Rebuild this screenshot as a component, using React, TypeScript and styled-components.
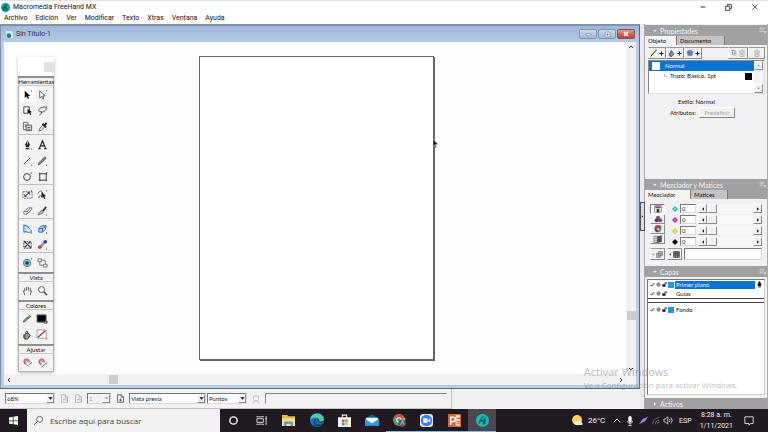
import React from "react";
import styled, { createGlobalStyle, css } from "styled-components";

const GlobalStyle = createGlobalStyle`
  *, *::before, *::after { box-sizing: border-box; }
  body { margin: 0; background: #f0f0f3; }
  button, input, select { font: inherit; color: inherit; margin: 0; padding: 0; border: 0; border-radius: 0; background: none; outline: 0; min-width: 0; }
  svg { display: block; flex: none; overflow: visible; }
  h1, h2, h3, p, ul { margin: 0; padding: 0; font-size: inherit; font-weight: inherit; list-style: none; }
`;

const systemFont = `"Open Sans", "Noto Sans", sans-serif`;
const captionFont = `Roboto, "Noto Sans", sans-serif`;
const classicFont = `Lato, "Liberation Sans", sans-serif`;

const raised = css`
  background: #f0f0f0;
  border: 1px solid;
  border-color: #fff #8b8b8b #8b8b8b #fff;
`;
const sunken = css`
  background: #fff;
  border: 1px solid;
  border-color: #777 #d8d8d8 #d8d8d8 #777;
`;

const Screen = styled.div`
  position: relative;
  display: flex;
  flex-direction: column;
  min-height: 100vh;
  font-family: ${classicFont};
  font-size: 6px;
  line-height: 8px;
  color: #111;
`;

/* ---------- application frame ---------- */
const TitleBar = styled.header`
  display: flex;
  align-items: center;
  gap: 3px;
  height: 13px;
  padding: 0 2px 0 1px;
  background: #fff;
  border-top: 1px solid #e4e4e4;
  font-family: ${captionFont};
  font-size: 7px;
`;
const AppTitle = styled.h1`
  flex: 1;
`;
const WindowButton = styled.button`
  display: grid;
  place-items: center;
  width: 23px;
  height: 12px;
`;
const MenuBar = styled.nav`
  display: flex;
  gap: 8px;
  height: 11px;
  padding: 0 4px;
  background: #fff;
  font-family: ${captionFont};
  font-size: 7px;
  line-height: 11px;
`;
const Workspace = styled.main`
  flex: 1;
  display: flex;
`;
const Editor = styled.section`
  flex: 1;
  display: flex;
  flex-direction: column;
  min-width: 0;
`;

/* ---------- document window ---------- */
const DocWindow = styled.section`
  flex: 1;
  display: flex;
  flex-direction: column;
  border: 1px solid #4d7180;
  border-top: 2px solid #8592a6;
  border-left-color: #7f90a8;
  background: #b9cde8;
`;
const DocTitleBar = styled.header`
  display: flex;
  align-items: center;
  gap: 3px;
  height: 16px;
  padding: 0 4px 0 5px;
  background: linear-gradient(#9fb8d9, #b6cae5);
  font-family: ${captionFont};
  font-size: 7px;
  color: #26344a;
`;
const DocTitle = styled.h2`
  flex: 1;
`;
const DocButton = styled.button<{ $danger?: boolean }>`
  display: grid;
  place-items: center;
  width: 18px;
  height: 10px;
  margin-left: -2px;
  border: 1px solid ${(p) => (p.$danger ? "#8c4f55" : "#8194b0")};
  border-radius: 2px;
  background: ${(p) => (p.$danger ? "linear-gradient(#dc9a94, #c0392f)" : "linear-gradient(#ccdaee, #a5bbd9)")};
`;
const DocBody = styled.div`
  flex: 1;
  display: grid;
  grid-template-columns: 1fr 10px;
  grid-template-rows: 1fr 11px;
  margin: 0 3px 3px;
  background: #f3f3f6;
`;
const Canvas = styled.div`
  position: relative;
  display: grid;
  place-items: center;
  background: #fefefe;
`;
const Artboard = styled.div`
  position: relative;
  left: 1px;
  width: 235px;
  height: 304px;
  border: 1px solid #666;
  box-shadow: 1px 1px 0 #666;
  background: #fff;
`;
const Pointer = styled.svg`
  position: absolute;
  left: 233px;
  top: 82px;
`;
const ScrollBar = styled.div<{ $vertical?: boolean }>`
  display: flex;
  flex-direction: ${(p) => (p.$vertical ? "column" : "row")};
  align-items: center;
  background: #f1f1f4;
`;
const ScrollArrow = styled.button`
  display: grid;
  place-items: center;
  width: 10px;
  height: 10px;
`;
const ScrollSpace = styled.span<{ $grow: number }>`
  flex: ${(p) => p.$grow};
`;
const ScrollThumb = styled.span`
  width: 9px;
  height: 9px;
  background: #cdcdd0;
`;

/* ---------- tool palette ---------- */
const Palette = styled.aside`
  position: absolute;
  left: 14px;
  top: 15px;
  width: 36px;
  background: #f2f2f2;
  box-shadow: inset 0 0 0 1px #b4b4b4, 0 1px 3px #bbb;
`;
const PaletteGrip = styled.div`
  display: flex;
  justify-content: flex-end;
  align-items: center;
  height: 19px;
  background: #fff;
`;
const GripBox = styled.span`
  width: 10px;
  height: 10px;
  background: #e3e3e3;
`;
const PaletteTitle = styled.h3`
  height: 10px;
  border-top: 2px solid #8f8f8f;
  border-bottom: 1px solid #c8c8c8;
  line-height: 8px;
  text-align: center;
  white-space: nowrap;
`;
const ToolGroup = styled.div<{ $last?: boolean }>`
  display: grid;
  grid-template-columns: 15px 15px;
  padding-left: 2px;
  padding-bottom: ${(p) => (p.$last ? 2 : 0)}px;
  & + & { border-top: 1px solid #c0c0c0; padding-top: 1px; }
`;
const ToolButton = styled.button<{ $active?: boolean }>`
  display: grid;
  place-items: center;
  height: 16px;
  background: ${(p) => (p.$active ? "#fff" : "transparent")};
`;

/* ---------- status bar ---------- */
const StatusBar = styled.footer`
  display: flex;
  align-items: center;
  gap: 4px;
  width: 452px;
  height: 20px;
  padding: 0 4px 0 5px;
  border-right: 1px solid #c4c4c4;
  border-bottom: 1px solid #c4c4c4;
  background: #f2f2f4;
`;
const ComboPair = styled.span`
  display: flex;
  gap: 1px;
`;
const Combo = styled.span<{ $width: number; $muted?: boolean }>`
  display: flex;
  width: ${(p) => p.$width}px;
  height: 11px;
  ${sunken}
  ${(p) => p.$muted && css`background: #f2f2f4; color: #999;`}
`;
const ComboSelect = styled.select`
  flex: 1;
  appearance: none;
  padding-left: 1px;
  line-height: 9px;
  opacity: 1;
`;
const ComboArrow = styled.span`
  display: grid;
  place-items: center;
  width: 8px;
  ${raised}
  pointer-events: none;
`;
const IconButton = styled.button`
  display: grid;
  place-items: center;
  width: 10px;
  height: 12px;
`;
const StatusField = styled.output`
  flex: 1;
  height: 11px;
  border: 1px solid transparent;
  border-top-color: #888;
  border-left-color: #888;
`;

/* ---------- dock ---------- */
const Splitter = styled.div`
  position: relative;
  width: 5px;
  border-right: 1px solid #aaa;
  background: #e9e9ee;
`;
const SplitterHandle = styled.button`
  position: absolute;
  top: 178px;
  left: 0;
  display: grid;
  place-items: center;
  width: 5px;
  height: 29px;
  border: 1px solid #555;
  background: #ddd;
`;
const Dock = styled.aside`
  display: flex;
  flex-direction: column;
  width: 123px;
  padding-top: 1px;
  background: #f1f1f3;
  border-right: 1px solid #aaa;
`;
const PanelHeader = styled.h2`
  display: flex;
  align-items: center;
  gap: 3px;
  height: 11px;
  padding: 0 1px 0 8px;
  background: #a1a1a3;
  color: #f2f2f2;
  font-size: 7px;
`;
const PanelTitle = styled.span`
  flex: 1;
`;
const Tabs = styled.div`
  display: flex;
  height: 9px;
  background: #a1a1a3;
`;
const Tab = styled.button<{ $width: number; $active?: boolean }>`
  width: ${(p) => p.$width}px;
  padding-left: 3px;
  border-right: 1px solid #777;
  background: ${(p) => (p.$active ? "#f3f3f3" : "#c3c3c5")};
  text-align: left;
  line-height: 9px;
`;
const ObjectPanel = styled.div`
  height: 134px;
  padding: 2px 2px 0 3px;
`;
const Toolbar = styled.div`
  display: flex;
  height: 12px;
  margin-bottom: 1px;
`;
const ToolbarButton = styled.button<{ $width: number }>`
  display: flex;
  align-items: center;
  justify-content: center;
  gap: 1px;
  width: ${(p) => p.$width}px;
  ${raised}
  border-top-color: #999;
`;
const ToolbarGap = styled.span`
  flex: 1;
  border-top: 1px solid #999;
`;
const ObjectList = styled.div`
  display: flex;
  height: 34px;
  background: #fff;
  border: 1px solid;
  border-color: #888 #ddd #ddd #888;
`;
const ObjectRows = styled.ul`
  flex: 1;
`;
const ObjectRow = styled.li<{ $selected?: boolean }>`
  display: flex;
  align-items: center;
  gap: ${(p) => (p.$selected ? 5 : 2)}px;
  height: 10px;
  padding: 0 2px 0 ${(p) => (p.$selected ? 3 : 15)}px;
  background: ${(p) => (p.$selected ? "#0a74d4" : "#fff")};
  color: ${(p) => (p.$selected ? "#e6f2ff" : "#111")};
`;
const Chip = styled.span<{ $color: string; $size: number }>`
  width: ${(p) => p.$size}px;
  height: ${(p) => p.$size}px;
  background: ${(p) => p.$color};
`;
const RowText = styled.span`
  flex: 1;
  white-space: nowrap;
`;
const ListScroll = styled.div`
  display: flex;
  flex-direction: column;
  justify-content: space-between;
  width: 10px;
  background: #f4f4f4;
`;
const StepButton = styled.button`
  flex: none;
  display: grid;
  place-items: center;
  width: 9px;
  height: 9px;
  ${raised}
`;
const StyleLine = styled.p`
  margin-top: 4px;
  padding-left: 30px;
`;
const AttributeLine = styled.div`
  display: flex;
  align-items: center;
  gap: 3px;
  margin-top: 1px;
  padding-left: 22px;
`;
const DefaultButton = styled.button`
  width: 36px;
  height: 11px;
  ${raised}
  color: #aaa;
`;
const MixerPanel = styled.div`
  height: 67px;
  padding: 4px 5px 0 5px;
`;
const MixerTop = styled.div`
  display: flex;
  gap: 7px;
  height: 45px;
`;
const ModeColumn = styled.div`
  flex: none;
  display: grid;
  grid-template-rows: repeat(4, 10px);
  width: 15px;
  height: 42px;
  padding-top: 1px;
`;
const ModeButton = styled.button<{ $active?: boolean }>`
  display: grid;
  place-items: center;
  ${raised}
  ${(p) => p.$active && css`border-color: #777 #fff #fff #777; background: #fff;`}
`;
const Channels = styled.div`
  flex: 1;
  min-width: 0;
  display: grid;
  grid-template-columns: minmax(0, 1fr);
  grid-template-rows: repeat(4, 11px);
`;
const Channel = styled.label`
  display: flex;
  align-items: center;
`;
const ChannelInput = styled.input`
  flex: none;
  width: 16px;
  height: 9px;
  margin: 0 2px;
  padding-left: 1px;
  ${sunken}
`;
const ChannelRange = styled.input`
  flex: 1;
  width: 0;
  appearance: none;
  height: 9px;
  background: #f7f7f7;
  &::-webkit-slider-thumb {
    appearance: none;
    width: 10px;
    height: 9px;
    ${raised}
  }
`;
const MixerBottom = styled.div`
  display: flex;
  gap: 2px;
  height: 12px;
`;
const SwatchField = styled.input`
  flex: 1;
  ${sunken}
`;
const LayerPanel = styled.div`
  flex: 1;
  display: flex;
  padding: 2px 2px 3px;
`;
const LayerList = styled.ul`
  flex: 1;
  background: #fff;
  border: 1px solid;
  border-color: #777 #ccc #ccc #777;
`;
const LayerRow = styled.li`
  display: flex;
  align-items: center;
  gap: 1px;
  height: 9px;
  padding: 0 1px 0 2px;
`;
const LayerName = styled.span<{ $selected?: boolean }>`
  flex: 1;
  padding-left: 1px;
  background: ${(p) => (p.$selected ? "#0a74d4" : "transparent")};
  color: ${(p) => (p.$selected ? "#e6f2ff" : "#111")};
`;
const LayerDivider = styled.li`
  height: 5px;
  margin-bottom: 2px;
  border: solid #444;
  border-width: 1px 0;
`;

/* ---------- desktop ---------- */
const Watermark = styled.div`
  position: absolute;
  right: 30px;
  bottom: 42px;
  color: rgba(140, 140, 150, 0.6);
  font-family: ${systemFont};
  font-size: 8px;
  line-height: 10px;
  pointer-events: none;
`;
const WatermarkTitle = styled.p`
  font-size: 11px;
  line-height: 16px;
`;
const TaskBar = styled.footer`
  display: flex;
  align-items: stretch;
  height: 23px;
  background: #211a22;
  color: #f2f2f2;
  font-family: ${captionFont};
  font-size: 7px;
`;
const StartButton = styled.button`
  display: grid;
  place-items: center;
  width: 27px;
`;
const SearchBox = styled.label`
  display: flex;
  align-items: center;
  gap: 7px;
  width: 193px;
  padding-left: 7px;
  background: #f2f2f3;
  color: #444;
`;
const SearchInput = styled.input`
  flex: 1;
  font-family: ${systemFont};
  font-size: 8px;
  &::placeholder { color: #444; opacity: 1; }
`;
const AppButtons = styled.div`
  display: grid;
  grid-template-columns: repeat(10, 1fr);
  width: 276px;
`;
const AppButton = styled.button<{ $open?: boolean; $active?: boolean }>`
  display: grid;
  place-items: center;
  border-bottom: 1px solid ${(p) => (p.$open ? "#76b9e8" : "transparent")};
  background: ${(p) => (p.$active ? "#4d464e" : "transparent")};
`;
const Tray = styled.div`
  flex: 1;
  display: flex;
  align-items: center;
  justify-content: flex-end;
  gap: 4px;
  padding-right: 14px;
`;
const Weather = styled.span`
  display: flex;
  align-items: center;
  gap: 5px;
  margin-right: 4px;
  font-size: 8px;
`;
const LanguageLabel = styled.span`
  margin: 0 4px 0 2px;
`;
const Clock = styled.time`
  margin-right: 7px;
  line-height: 11px;
  text-align: center;
`;

/* ---------- drawings ---------- */
const Svg = ({ s = 12, children }: { s?: number; children: React.ReactNode }) => (
  <svg width={s} height={s} viewBox="0 0 12 12" fill="none" stroke="#333" strokeWidth="1" aria-hidden="true">
    {children}
  </svg>
);
const Triangle = ({ dir, s = 5, color = "#222" }: { dir: "up" | "down" | "left" | "right"; s?: number; color?: string }) => {
  const d = { up: "M1 9 6 3l5 6z", down: "M1 3h10L6 9z", left: "M9 1v10L3 6z", right: "M3 1v10l6-5z" }[dir];
  return <Svg s={s}><path d={d} fill={color} stroke="none" /></Svg>;
};
const Chevron = ({ dir }: { dir: "up" | "down" | "left" | "right" }) => {
  const d = { up: "M2 8l4-4 4 4", down: "M2 4l4 4 4-4", left: "M8 2 4 6l4 4", right: "M4 2l4 4-4 4" }[dir];
  return <Svg s={6}><path d={d} strokeWidth="2" /></Svg>;
};
const dot = <path d="M10 2h1" stroke="#222" />;
const corner = <path d="M10 11h1" stroke="#222" />;
const FreeHandLogo = ({ s = 10 }: { s?: number }) => (
  <Svg s={s}>
    <circle cx="6" cy="6" r="6" fill="#159a9c" stroke="none" />
    <path d="M3 10C4 7 5 3 8 2M5 7c2-2 3-1 2 1s0 2 2 0M3 6l4-1" stroke="#083f48" strokeWidth="1.2" />
  </Svg>
);
const tools: Record<string, React.ReactNode> = {
  Puntero: <><path d="M3 2v8l2-2 1.500 3 1.300-.7L6.500 7.500H9z" fill="#000" stroke="none" />{dot}</>,
  Subseleccionar: <><path d="M3 2v8l2-2 1.500 3 1-.6L6.300 7.500H9z" fill="#fff" strokeWidth=".8" />{dot}</>,
  Página: <><path d="M6 9H2V2h6v4" fill="#fff" /><path d="M6 4v6l1.500-1.500L9 11l1-.6-1-2.400h2z" fill="#111" stroke="none" /></>,
  Lazo: <><path d="M4 7.500C0 7 2 3.500 6 2.500s6 .5 3.500 3S6 8 4 7.500zM4 7c1.500 1 1 3-1.500 4" stroke="#444" />{dot}</>,
  Salida: <><path d="M1.500 1.500h5v8h-5zM3 4h2M3 6h2" stroke="#666" /><path d="M4.500 4.500h6v6h-6zM6 7h3M6 9h3" fill="#ddd" stroke="#555" /></>,
  Cuentagotas: <><path d="M2 11l1-3 4-4 2 2-4 4z" fill="#ddd" stroke="#555" strokeWidth=".8" /><path d="M6 3l4 4M8 5l2.500-3" stroke="#222" strokeWidth="2" /></>,
  Pluma: <><path d="M6 1L3.500 6l1 3h3l1-3z" fill="#222" stroke="none" /><path d="M4 10.500h4" strokeWidth="1.500" /><path d="M6 2v4" stroke="#fff" strokeWidth=".7" />{corner}</>,
  Texto: <path d="M2.500 10.500L6 2l3.500 8.500M4 7.500h4M1.500 10.500h2.500M8 10.500h2.500" stroke="#222" strokeWidth="1.300" />,
  Línea: <><path d="M2 10l7-7" stroke="#444" />{corner}</>,
  Lápiz: <><path d="M1.500 11l1-3 6-6 1.500 1.500-6 6z" fill="#888" stroke="#444" strokeWidth=".8" />{corner}</>,
  Elipse: <><circle cx="5.500" cy="6.500" r="3.700" />{dot}</>,
  Rectángulo: <><path d="M3 3h7v7H3zM2 3h1M10 3h1M2 10h1M10 10h1M3 2v1M3 10v1M10 10v1" />{dot}</>,
  Escala: <><path d="M1 3h10v7H1z" stroke="#5c5c8c" strokeDasharray="2 1" /><path d="M3 8l5-4M6 4h2v2M3 6v2h2" />{dot}</>,
  Forma: <><path d="M1 5c2-4 5-3 5-1M2 10c0-4 3-3 4-1" stroke="#555" /><path d="M5 3v7l1.500-1.500L8 11l1-.6-1-2.400h2z" fill="#222" stroke="none" />{dot}</>,
  Borrador: <path d="M2 7l5-4h4L9 7l-4 3H2zM2 7h4l3-4M6 7L5 10" stroke="#666" fill="#eee" strokeWidth=".8" />,
  Cuchillo: <><path d="M1 11c1-3 3-5 5-5l1 2c-1 2-4 2-6 3z" fill="#bbb" stroke="#444" strokeWidth=".7" /><path d="M6.500 6.500L10 2" strokeWidth="2" />{corner}</>,
  Perspectiva: <><path d="M2 2v8l5-1V4z" fill="#b9dcf5" stroke="#2471b5" /><path d="M7 5l3 3v2H5" fill="#fff" stroke="#2471b5" />{corner}</>,
  Extrusión: <><path d="M2 6l3-3h5L9 7 6 10H2z" fill="#b9d4f5" stroke="#3266ad" /><path d="M2 6h4l4-3M6 6v4" stroke="#3266ad" />{corner}</>,
  Trazo: <><path d="M2 3h8v7H2z" strokeDasharray="2 1" /><path d="M2 2l8 8M9 3L7 5M5 7l-2 2" stroke="#223" strokeWidth="1.300" /></>,
  Mezcla: <><path d="M3 9l5-5" stroke="#b58db0" strokeWidth="3" /><circle cx="9" cy="3" r="2" fill="#28448d" stroke="none" /><circle cx="3" cy="9" r="2" fill="#cc4132" stroke="none" />{corner}</>,
  Acción: <><circle cx="5.500" cy="6.500" r="4" fill="#88c1d6" stroke="#557f94" /><circle cx="5.500" cy="6.500" r="2" fill="#153f66" stroke="none" />{dot}</>,
  Conector: <path d="M1 2h4v3H1zM7 8h4v3H7zM5 3.500h4V8M3 5v4h4" stroke="#777" />,
  Mano: <path d="M3 11L1.500 6M3 7V3M5 6V2M7 6V2M9 7V3M10.500 6L9 11" stroke="#555" />,
  Zoom: <><circle cx="5" cy="5" r="3.300" stroke="#555" /><path d="M7.500 7.500L11 11" stroke="#555" strokeWidth="1.800" /></>,
  "Color de trazo": <path d="M1.500 10l1-2.500 6-5 1 1.500-6 5z" fill="#999" stroke="#444" strokeWidth=".8" />,
  Negro: <><path d="M0 2h10v8H0z" fill="#000" stroke="#777" /><path d="M8 9h3v2H8z" fill="#fff" stroke="#333" /></>,
  "Color de relleno": <><path d="M3 6l3-2 3 3-3 4H3z" fill="#999" /><path d="M4 5c0-4 3-3 2 0M2 6v4" /></>,
  "Sin relleno": <><path d="M0 1h10v9H0z" fill="#fff" stroke="#999" /><path d="M1 9l8-7" stroke="#a12c3f" strokeWidth="1.500" />{corner}</>,
  "Ajustar a punto": <><path d="M8 4.500A3 3 0 105 8L3.500 6.500a1.500 1.500 0 112.500-2L7.500 6z" fill="#e9a4a8" stroke="#b8434d" strokeWidth=".9" /><path d="M6 9l1 1M8 8l3-2" stroke="#555" /></>,
  "Ajustar a objeto": <><path d="M8 4.500A3 3 0 105 8L3.500 6.500a1.500 1.500 0 112.500-2L7.500 6z" fill="#e9a4a8" stroke="#b8434d" strokeWidth=".9" /><path d="M5 11l6-5" stroke="#555" /></>,
};
const ToolSet = ({ names, last }: { names: string[]; last?: boolean }) => (
  <ToolGroup $last={last}>
    {names.map((n) => (
      <ToolButton key={n} type="button" aria-label={n} $active={n === "Puntero"}><Svg s={11}>{tools[n]}</Svg></ToolButton>
    ))}
  </ToolGroup>
);
const PageIcon = ({ color = "#aaa", flip }: { color?: string; flip?: boolean }) => (
  <Svg s={9}><path d="M2 1h5l3 3v7H2zM7 1v3h3" stroke={color} /><path d={flip ? "M4 8h4M6 6v4" : "M4 8l4-2v3"} stroke={color} /></Svg>
);
const MenuGlyph = () => <Svg s={7}><path d="M1 2h8M1 5h8M1 8h5M8 8h4l-2 3z" stroke="#eee" /></Svg>;
const Plus = () => <Svg s={5}><path d="M6 1v10M1 6h10" strokeWidth="2.500" stroke="#222" /></Svg>;
const TrashIcon = () => <Svg s={8}><path d="M2 3h8M5 1h2M3 3v8h6V3M5 5v4M7 5v4" stroke="#999" /></Svg>;

const Panel = ({ title, open = true }: { title: string; open?: boolean }) => (
  <PanelHeader>
    <Triangle dir={open ? "down" : "right"} color="#fff" s={4} />
    <PanelTitle>{title}</PanelTitle>
    {open && <MenuGlyph />}
  </PanelHeader>
);

const ComboBox = ({ label, value, width, muted }: { label: string; value: string; width: number; muted?: boolean }) => (
  <Combo $width={width} $muted={muted}>
    <ComboSelect aria-label={label} disabled={muted}><option>{value}</option></ComboSelect>
    <ComboArrow><Triangle dir="down" color={muted ? "#aaa" : "#111"} /></ComboArrow>
  </Combo>
);

const LayerIcons = () => (
  <>
    <Svg s={5}><path d="M1 7l3 3 6-7" stroke="#111" strokeWidth="2" /></Svg>
    <Svg s={5}><circle cx="6" cy="6" r="4" fill="#999" stroke="#666" strokeWidth="2" /></Svg>
    <Svg s={5}><path d="M1 6h7v5H1z" fill="#111" /><path d="M7 6V2h4v3" strokeWidth="2" /></Svg>
  </>
);

const modes: [string, React.ReactNode][] = [
  ["CMYK", <><path d="M1 1h10v10H1z" fill="#fff" stroke="#555" /><path d="M2 2h8v3H2z" fill="#a1348e" stroke="none" /><path d="M4 6h4v5H4z" fill="#333" stroke="none" /></>],
  ["RGB", <><circle cx="6" cy="4" r="3" fill="#337c55" stroke="none" /><circle cx="4" cy="8" r="3" fill="#43338d" stroke="none" /><circle cx="9" cy="8" r="3" fill="#c32738" stroke="none" /></>],
  ["HLS", <><circle cx="6" cy="6" r="5" fill="#58a83d" stroke="none" /><path d="M6 6L1 5a5 5 0 0110 0z" fill="#cb3150" stroke="none" /><path d="M6 6v5a5 5 0 01-5-6z" fill="#5140a0" stroke="none" /><circle cx="6" cy="6" r="1.500" fill="#eee" stroke="none" /></>],
  ["Sistema", <><path d="M0 2h7v9H0z" fill="#eee" stroke="#555" /><path d="M5 3l6-2v9l-6 1z" fill="#67444e" /><path d="M1 5h3M1 8h3" stroke="#2c78c4" /></>],
];
const channels: [string, string][] = [["Cian", "#28babe"], ["Magenta", "#b32aa7"], ["Amarillo", "#d9d13e"], ["Negro", "#111"]];

const taskApps: { name: string; open?: boolean; active?: boolean; art: React.ReactNode }[] = [
  { name: "Cortana", art: <Svg s={11}><circle cx="6" cy="6" r="4" stroke="#fff" strokeWidth="1.500" /></Svg> },
  { name: "Vista de tareas", art: <Svg s={11}><path d="M1 1v1h7V1M1 11v-1h7v1M1 4h7v4H1zM11 1v10M10 4h2" stroke="#ddd" /></Svg> },
  { name: "Explorador", art: <Svg s={13}><path d="M0 1h5l1 1h6v9H0z" fill="#e5b744" stroke="none" /><path d="M0 4h12v7H0z" fill="#fce08a" stroke="none" /><path d="M2 7h8v4H8V9H4v2H2z" fill="#4e99ca" stroke="none" /></Svg> },
  { name: "Edge", art: <Svg s={14}><circle cx="6" cy="6" r="6" fill="#1872bd" stroke="none" /><path d="M0 6C1-2 12-1 12 6c0 3-5 3-5 1 1-4-5-4-7-1z" fill="#52c9a4" stroke="none" /><path d="M5 5c-2 4 2 6 6 4-3 4-8 3-8-1 0-2 1-3 2-3z" fill="#0c3e80" stroke="none" /><path d="M6 5c2 0 1 3 2 3 3 0 4-1 4-1" stroke="#211a22" /></Svg> },
  { name: "Tienda", art: <Svg s={13}><path d="M4 4V1h4v3" stroke="#eee" /><path d="M0 3h12v9H0z" fill="#f5f5f5" stroke="none" /><path d="M3.500 5H6v2.500H3.500z" fill="#df5933" stroke="none" /><path d="M6.500 5H9v2.500H6.500z" fill="#72ad3c" stroke="none" /><path d="M3.500 8H6v2.500H3.500z" fill="#2f8ed4" stroke="none" /><path d="M6.500 8H9v2.500H6.500z" fill="#e8b734" stroke="none" /></Svg> },
  { name: "Correo", art: <Svg s={14}><path d="M0 5l6-4 6 4v6H0z" fill="#155b9d" stroke="none" /><path d="M1 4h10v3L6 9 1 7z" fill="#f3f7fb" stroke="none" /><path d="M0 5l6 4 6-4v6H0z" fill="#2d9cdf" stroke="none" /></Svg> },
  { name: "Chrome", open: true, art: <Svg s={13}><circle cx="5.500" cy="5.500" r="5.500" fill="#4ea453" stroke="none" /><path d="M5.500 5.500L1 2.500a5.500 5.500 0 019.500 1z" fill="#d84c42" stroke="none" /><path d="M6 6l5-2.500c1 3-1 7-5 7.500z" fill="#e9c84a" stroke="none" /><circle cx="5.500" cy="5.500" r="2" fill="#3e7bd3" stroke="#fff" /><circle cx="8.500" cy="8.500" r="3.500" fill="#55575b" stroke="none" /><path d="M7 10l2-4 1 4" stroke="#ddd" strokeWidth=".7" /></Svg> },
  { name: "Zoom", open: true, art: <Svg s={13}><rect width="12" height="12" rx="3" fill="#e5ecf7" stroke="none" /><circle cx="6" cy="6" r="5.300" fill="#3b7ce6" stroke="none" /><path d="M3 4h4v4H3zM7.500 6L9.500 4v4z" fill="#fff" stroke="none" /></Svg> },
  { name: "PowerPoint", open: true, art: <Svg s={13}><path d="M0 0h12v12H0z" fill="#d3683e" stroke="none" /><path d="M7 1h4v10H7z" fill="#f2d8ce" stroke="none" /><path d="M2.500 10V3H4.500c3 0 3 4 0 4h-2" stroke="#fff" strokeWidth="1.300" /><path d="M8 4h3M8 7h3M8 9h3" stroke="#cc6541" /></Svg> },
  { name: "FreeHand", open: true, active: true, art: <Svg s={13}><circle cx="6" cy="6" r="6" fill="#20b9b5" stroke="none" /><path d="M3 9C4 6 5 3 7 2M5 7c2-2 3-1 2 1s0 2 2-1M3 6h6M7 9l2-6" stroke="#114c58" /></Svg> },
];

export default function App() {
  return (
    <Screen>
      <GlobalStyle />
      <TitleBar>
        <FreeHandLogo s={9} />
        <AppTitle>Macromedia FreeHand MX</AppTitle>
        <WindowButton aria-label="Minimizar"><Svg s={6}><path d="M1 6h10" strokeWidth="2" /></Svg></WindowButton>
        <WindowButton aria-label="Restaurar"><Svg s={7}><path d="M1 4h7v7H1zM4 4V1h7v7H8" strokeWidth="1.500" /></Svg></WindowButton>
        <WindowButton aria-label="Cerrar"><Svg s={6}><path d="M1 1l10 10M11 1L1 11" strokeWidth="1.500" /></Svg></WindowButton>
      </TitleBar>
      <MenuBar>
        {["Archivo", "Edición", "Ver", "Modificar", "Texto", "Xtras", "Ventana", "Ayuda"].map((m) => (
          <button key={m} type="button">{m}</button>
        ))}
      </MenuBar>

      <Workspace>
        <Editor>
          <DocWindow>
            <DocTitleBar>
              <Svg s={7}><path d="M0 0h9l3 3v9H0z" fill="#d9eef2" stroke="none" /><circle cx="5" cy="8" r="4" fill="#13868d" stroke="none" /></Svg>
              <DocTitle>Sin Título-1</DocTitle>
              <DocButton aria-label="Minimizar documento"><Svg s={7}><path d="M2 5h8v3H2z" fill="#fff" stroke="#667a96" /></Svg></DocButton>
              <DocButton aria-label="Maximizar documento"><Svg s={7}><path d="M2 2h8v8H2z" fill="#fff" stroke="#667a96" /><path d="M5 5h2v2H5z" /></Svg></DocButton>
              <DocButton $danger aria-label="Cerrar documento"><Svg s={6}><path d="M2 2l8 8M10 2l-8 8" stroke="#fff" strokeWidth="3" /></Svg></DocButton>
            </DocTitleBar>
            <DocBody>
              <Canvas>
                <Artboard>
                  <Pointer width="5" height="9" viewBox="0 0 5 9" aria-hidden="true"><path d="M0 0v7l1.500-1 1 3 1-.5-1-3H5z" fill="#111" stroke="#fff" strokeWidth=".4" /></Pointer>
                </Artboard>
                <Palette>
                  <PaletteGrip><GripBox /></PaletteGrip>
                  <PaletteTitle>Herramientas</PaletteTitle>
                  <ToolSet names={["Puntero", "Subseleccionar", "Página", "Lazo", "Salida", "Cuentagotas"]} />
                  <ToolSet names={["Pluma", "Texto", "Línea", "Lápiz", "Elipse", "Rectángulo"]} />
                  <ToolSet names={["Escala", "Forma", "Borrador", "Cuchillo"]} />
                  <ToolSet names={["Perspectiva", "Extrusión", "Trazo", "Mezcla"]} />
                  <ToolSet last names={["Acción", "Conector"]} />
                  <PaletteTitle>Vista</PaletteTitle>
                  <ToolSet last names={["Mano", "Zoom"]} />
                  <PaletteTitle>Colores</PaletteTitle>
                  <ToolSet last names={["Color de trazo", "Negro", "Color de relleno", "Sin relleno"]} />
                  <PaletteTitle>Ajustar</PaletteTitle>
                  <ToolSet last names={["Ajustar a punto", "Ajustar a objeto"]} />
                </Palette>
              </Canvas>
              <ScrollBar $vertical>
                <ScrollArrow aria-label="Arriba"><Chevron dir="up" /></ScrollArrow>
                <ScrollSpace $grow={88} />
                <ScrollThumb />
                <ScrollSpace $grow={15} />
                <ScrollArrow aria-label="Abajo"><Chevron dir="down" /></ScrollArrow>
              </ScrollBar>
              <ScrollBar>
                <ScrollArrow aria-label="Izquierda"><Chevron dir="left" /></ScrollArrow>
                <ScrollSpace $grow={16} />
                <ScrollThumb />
                <ScrollSpace $grow={84} />
                <ScrollArrow aria-label="Derecha"><Chevron dir="right" /></ScrollArrow>
              </ScrollBar>
            </DocBody>
          </DocWindow>
          <StatusBar>
            <ComboBox label="Ampliación" value="68%" width={50} />
            <IconButton aria-label="Página anterior"><PageIcon /></IconButton>
            <IconButton aria-label="Página siguiente"><PageIcon /></IconButton>
            <ComboBox label="Página" value="1" width={24} muted />
            <IconButton aria-label="Añadir página"><PageIcon color="#444" flip /></IconButton>
            <ComboPair>
              <ComboBox label="Modo de vista" value="Vista previa" width={77} />
              <ComboBox label="Unidades" value="Puntos" width={40} />
            </ComboPair>
            <IconButton aria-label="Cancelar"><Svg s={8}><circle cx="6" cy="5" r="4" stroke="#aaa" /><path d="M1 1l2 2M11 1L9 3M1 11h3l1-2M11 11H8L7 9" stroke="#aaa" /></Svg></IconButton>
            <StatusField aria-label="Estado" />
          </StatusBar>
        </Editor>

        <Splitter><SplitterHandle aria-label="Contraer paneles"><Triangle dir="right" s={3} /></SplitterHandle></Splitter>

        <Dock>
          <Panel title="Propiedades" />
          <Tabs role="tablist"><Tab role="tab" $width={32} $active>Objeto</Tab><Tab role="tab" $width={48}>Documento</Tab></Tabs>
          <ObjectPanel>
            <Toolbar>
              <ToolbarButton $width={18} aria-label="Añadir trazo"><Svg s={8}><path d="M1 11l9-10" strokeWidth="1.500" /></Svg><Plus /></ToolbarButton>
              <ToolbarButton $width={18} aria-label="Añadir relleno"><Svg s={8}>{tools["Color de relleno"]}</Svg><Plus /></ToolbarButton>
              <ToolbarButton $width={18} aria-label="Añadir efecto"><Svg s={8}><circle cx="6" cy="6" r="4.500" fill="#7377b5" stroke="#9a9dc8" /></Svg><Plus /></ToolbarButton>
              <ToolbarGap />
              <ToolbarButton $width={20} aria-label="Eliminar rama"><Svg s={6}><path d="M1 1h8M5 4h6M5 7h6M5 10h6M3 1v9" stroke="#888" strokeWidth="1.500" /></Svg><TrashIcon /></ToolbarButton>
              <ToolbarButton $width={17} aria-label="Eliminar"><TrashIcon /></ToolbarButton>
            </Toolbar>
            <ObjectList>
              <ObjectRows>
                <ObjectRow $selected><Chip $color="#fff" $size={8} /><RowText>Normal</RowText></ObjectRow>
                <ObjectRow><Svg s={4}><path d="M2 0v7h8" stroke="#999" strokeWidth="2" /></Svg><RowText>Trazo: Básico, 1pt</RowText><Chip $color="#000" $size={7} /></ObjectRow>
              </ObjectRows>
              <ListScroll>
                <StepButton aria-label="Subir"><Triangle dir="up" s={3} color="#777" /></StepButton>
                <StepButton aria-label="Bajar"><Triangle dir="down" s={3} color="#777" /></StepButton>
              </ListScroll>
            </ObjectList>
            <StyleLine>Estilo: Normal</StyleLine>
            <AttributeLine>Atributos: <DefaultButton disabled>Predefinir</DefaultButton></AttributeLine>
          </ObjectPanel>

          <Panel title="Mezclador y Matices" />
          <Tabs role="tablist"><Tab role="tab" $width={46} $active>Mezclador</Tab><Tab role="tab" $width={37}>Matices</Tab></Tabs>
          <MixerPanel>
            <MixerTop>
              <ModeColumn>
                {modes.map(([name, art], i) => <ModeButton key={name} aria-label={name} $active={i === 0}><Svg s={8}>{art}</Svg></ModeButton>)}
              </ModeColumn>
              <Channels>
                {channels.map(([name, color]) => (
                  <Channel key={name}>
                    <Svg s={6}><path d="M6 0l6 6-6 6-6-6z" fill={color} stroke="none" />{name !== "Negro" && <circle cx="6" cy="6" r="2" fill="#fff" fillOpacity=".5" stroke="none" />}</Svg>
                    <ChannelInput aria-label={name} defaultValue="0" />
                    <StepButton aria-label={`Menos ${name}`}><Triangle dir="left" s={4} /></StepButton>
                    <ChannelRange type="range" aria-label={`Nivel de ${name}`} min={0} max={100} defaultValue={0} />
                    <StepButton aria-label={`Más ${name}`}><Triangle dir="right" s={4} /></StepButton>
                  </Channel>
                ))}
              </Channels>
            </MixerTop>
            <MixerBottom>
              <ToolbarButton $width={15} aria-label="Añadir a muestras"><Triangle dir="right" s={3} color="#888" /><Svg s={7}><path d="M4 1h7v7H4zM1 4h7v7H1z" fill="#aaa" stroke="#777" /></Svg></ToolbarButton>
              <ToolbarButton $width={15} aria-label="Añadir a matices"><Triangle dir="right" s={3} /><Svg s={7}><path d="M1 1h10v10H1zM1 4h10M1 7h10M4 1v10M8 1v10" fill="#888" /></Svg></ToolbarButton>
              <SwatchField aria-label="Muestra" />
            </MixerBottom>
          </MixerPanel>

          <Panel title="Capas" />
          <LayerPanel>
            <LayerList>
              <LayerRow><LayerIcons /><Chip $color="#2697d5" $size={6} /><LayerName $selected>Primer plano</LayerName><Svg s={7}><path d="M6 0L3 6l1 3h4l1-3zM4 11h4" fill="#111" /></Svg></LayerRow>
              <LayerRow><LayerIcons /><Chip $color="transparent" $size={6} /><LayerName>Guías</LayerName></LayerRow>
              <LayerDivider />
              <LayerRow><LayerIcons /><Chip $color="#2697d5" $size={6} /><LayerName>Fondo</LayerName></LayerRow>
            </LayerList>
          </LayerPanel>
          <Panel title="Activos" open={false} />
        </Dock>
      </Workspace>

      <TaskBar>
        <StartButton aria-label="Inicio"><Svg s={9}><path d="M0 2l5-1v5H0zM6 1l6-1v6H6zM0 7h5v4l-5-1zM6 7h6v5l-6-1z" fill="#fff" stroke="none" /></Svg></StartButton>
        <SearchBox>
          <Svg s={9}><circle cx="7.500" cy="4.500" r="4" stroke="#444" /><path d="M4.500 7.500L0 12" stroke="#444" /></Svg>
          <SearchInput aria-label="Buscar" placeholder="Escribe aquí para buscar" />
        </SearchBox>
        <AppButtons>
          {taskApps.map((a) => <AppButton key={a.name} aria-label={a.name} $open={a.open} $active={a.active}>{a.art}</AppButton>)}
        </AppButtons>
        <Tray>
          <Weather>
            <Svg s={11}><circle cx="5.500" cy="5.500" r="5.500" fill="#f6d353" stroke="none" /><path d="M4 11a2 2 0 011-4 3 3 0 015 1 2 2 0 011 3z" fill="#f2eee0" stroke="none" /></Svg>
            26°C
          </Weather>
          <Svg s={8}><path d="M1 8l5-5 5 5" stroke="#eee" strokeWidth="1.500" /></Svg>
          <Svg s={10}><rect x="4" y="0" width="4" height="8" rx="2" fill="#fff" stroke="none" /><path d="M3 6c0 4 6 4 6 0M6 9v3M4 11.500h4" stroke="#ddd" /></Svg>
          <Svg s={9}><path d="M0 11l5-7 7-3-4 6z" fill="#a285df" stroke="none" /></Svg>
          <Svg s={8}><path d="M1 11C1 5 5 1 11 1M5 11c0-4 2-6 6-6M8 11c0-2 1-3 3-3" stroke="#888" /></Svg>
          <Svg s={9}><path d="M0 4h2l3-3v10L2 8H0zM7 4q2 2 0 4M9 2q4 4 0 8" stroke="#eee" /></Svg>
          <LanguageLabel>ESP</LanguageLabel>
          <Clock>8:28 a. m.<br />1/11/2021</Clock>
          <Svg s={10}><path d="M1 1h10v8H8l-2 2v-2H1z" stroke="#eee" /></Svg>
        </Tray>
      </TaskBar>

      <Watermark>
        <WatermarkTitle>Activar Windows</WatermarkTitle>
        <p>Ve a Configuración para activar Windows.</p>
      </Watermark>
    </Screen>
  );
}
